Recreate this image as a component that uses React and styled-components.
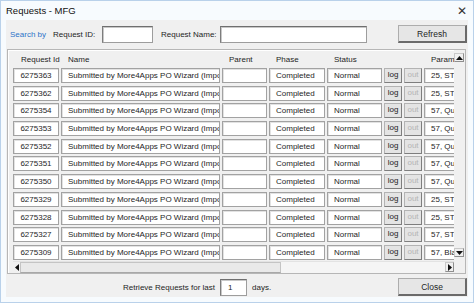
import styled, { createGlobalStyle } from 'styled-components';

const GlobalStyle = createGlobalStyle`
  html, body {
    margin: 0;
    padding: 0;
    background: #eaf4fb;
  }
  * {
    box-sizing: border-box;
  }
`;

const requests = [
  { id: '6275363', param: '25, ST' },
  { id: '6275362', param: '25, ST' },
  { id: '6275354', param: '57, Qu' },
  { id: '6275353', param: '57, Qu' },
  { id: '6275352', param: '57, Qu' },
  { id: '6275351', param: '57, Qu' },
  { id: '6275350', param: '57, Qu' },
  { id: '6275329', param: '25, ST' },
  { id: '6275328', param: '25, ST' },
  { id: '6275327', param: '57, ST' },
  { id: '6275309', param: '57, Bla' },
];

const Janela = styled.div`
  width: 474px;
  height: 303px;
  display: flex;
  flex-direction: column;
  background: #f7fbfe;
  border: 1px solid #b9d1ea;
  font-family: 'Liberation Sans', Arial, sans-serif;
  font-size: 8px;
  color: #1e1e1e;
  overflow: hidden;
`;

const BarraTitulo = styled.div`
  height: 19px;
  display: flex;
  align-items: center;
  justify-content: space-between;
  padding: 0 6px 0 5px;
  font-size: 9.5px;
  color: #111;
`;

const Fechar = styled.span`
  font-size: 12px;
  color: #333;
  line-height: 1;
`;

const Corpo = styled.div`
  flex: 1;
  display: flex;
  flex-direction: column;
  margin: 0 5px 5px 5px;
  background: #f0f0f0;
`;

const BarraPesquisa = styled.div`
  height: 27px;
  display: flex;
  align-items: center;
  padding: 1px 0 0 4px;
`;

const Rotulo = styled.span`
  width: ${(p) => p.$w}px;
  flex-shrink: 0;
  color: ${(p) => (p.$azul ? '#2e74c9' : '#1e1e1e')};
  white-space: nowrap;
`;

const Campo = styled.div`
  width: ${(p) => p.$w}px;
  height: 17px;
  flex-shrink: 0;
  background: #fff;
  border: 1px solid #9d9d9d;
  border-top-color: #6f6f6f;
  border-left-color: #7d7d7d;
  box-shadow: inset 1px 1px 0 #c8c8c8;
  margin-right: ${(p) => p.$mr || 0}px;
  display: flex;
  align-items: center;
  padding-left: 7px;
`;

const Botao = styled.div`
  width: 69px;
  height: 18px;
  margin-left: auto;
  margin-right: 1px;
  display: flex;
  align-items: center;
  justify-content: center;
  background: #e6e6e6;
  border: 1px solid #adadad;
  border-right: 2px solid #6a6a6a;
  border-bottom: 2px solid #6a6a6a;
  font-size: 8.5px;
`;

const Painel = styled.div`
  margin: 2px 2px 0 1px;
  height: 225px;
  display: grid;
  grid-template-columns: minmax(0, 1fr) 11px;
  grid-template-rows: minmax(0, 1fr) 12px;
  padding-left: 5px;
  border: 1px solid #b6b6b6;
  box-shadow: inset 1px 1px 0 #fff;
  background: #f0f0f0;
`;

const Conteudo = styled.div`
  grid-column: 1;
  grid-row: 1;
  overflow: hidden;
  min-width: 0;
`;

const Colunas = styled.div`
  display: grid;
  grid-template-columns: 46px 159px 45px 56px 55px 18px 18px 40px;
  column-gap: 2px;
  width: 520px;
`;

const Cabecalho = styled(Colunas)`
  height: 17px;
  align-items: center;
  padding-top: 1px;
`;

const TituloColuna = styled.span`
  padding-left: ${(p) => (p.$pl !== undefined ? p.$pl : 7)}px;
  white-space: nowrap;
`;

const Linhas = styled.div`
  display: flex;
  flex-direction: column;
  gap: 2.7px;
  padding-top: 1px;
`;

const Linha = styled(Colunas)`
  height: 15px;
`;

const Celula = styled.div`
  background: #fff;
  border: 1px solid #a2a2a2;
  box-shadow: inset 1px 1px 0 #e2e2e2;
  display: flex;
  align-items: center;
  justify-content: ${(p) => (p.$centro ? 'center' : 'flex-start')};
  padding-left: ${(p) => (p.$centro ? 0 : 6)}px;
  white-space: nowrap;
  overflow: hidden;
`;

const BotaoLinha = styled.div`
  background: #e4e4e4;
  border: 1px solid #b3b3b3;
  border-right-color: #7e7e7e;
  border-bottom-color: #7e7e7e;
  display: flex;
  align-items: center;
  justify-content: center;
  font-size: 8px;
  padding-bottom: 2px;
  color: ${(p) => (p.$inativo ? '#b4b4b4' : '#1e1e1e')};
`;

const RolagemVertical = styled.div`
  grid-column: 2;
  grid-row: 1 / 3;
  display: flex;
  flex-direction: column;
  justify-content: space-between;
  padding: 3px 0 16px 0;
  background: #f0f0f0;
`;

const RolagemHorizontal = styled.div`
  grid-column: 1;
  grid-row: 2;
  display: flex;
  align-items: stretch;
  height: 12px;
  border-top: 1px solid #e3e3e3;
`;

const Seta = styled.div`
  width: ${(p) => p.$w || 9}px;
  height: ${(p) => p.$h || 10}px;
  flex-shrink: 0;
  display: flex;
  align-items: center;
  justify-content: center;
  background: #f0f0f0;
  border: ${(p) => (p.$borda ? '1px solid #c9c9c9' : 'none')};
  border-bottom-color: #8e8e8e;
  border-right-color: #8e8e8e;
`;

const Polegar = styled.div`
  width: 261px;
  background: #e9e9e9;
  border: 1px solid #c4c4c4;
  border-bottom-color: #a8a8a8;
`;

const Trilho = styled.div`
  flex: 1;
  background: #f5f5f5;
`;

const Rodape = styled.div`
  flex: 1;
  display: flex;
  align-items: center;
  padding: 3px 0 0 0;
`;

const TextoRodape = styled.span`
  width: 97px;
  margin-left: 117px;
  white-space: nowrap;
`;

const Dias = styled.span`
  margin-left: 5px;
`;

const Triangulo = ({ dir }) => {
  const pontos = {
    up: '0,5 3.5,1 7,5',
    down: '0,1 3.5,5 7,1',
    left: '5,0 1,3.5 5,7',
    right: '1,0 5,3.5 1,7',
  };
  const vertical = dir === 'up' || dir === 'down';
  return (
    <svg width={vertical ? 7 : 6} height={vertical ? 6 : 7} viewBox={vertical ? '0 0 7 6' : '0 0 6 7'}>
      <polygon points={pontos[dir]} fill="#111" />
    </svg>
  );
};

function App() {
  return (
    <>
      <GlobalStyle />
      <Janela>
        <BarraTitulo>
          <span>Requests - MFG</span>
          <Fechar>✕</Fechar>
        </BarraTitulo>
        <Corpo>
          <BarraPesquisa>
            <Rotulo $azul $w={43}>Search by</Rotulo>
            <Rotulo $w={49}>Request ID:</Rotulo>
            <Campo $w={51} $mr={8} />
            <Rotulo $w={59}>Request Name:</Rotulo>
            <Campo $w={147} />
            <Botao>Refresh</Botao>
          </BarraPesquisa>
          <Painel>
            <Conteudo>
              <Cabecalho>
                <TituloColuna $pl={8}>Request Id</TituloColuna>
                <TituloColuna>Name</TituloColuna>
                <TituloColuna>Parent</TituloColuna>
                <TituloColuna>Phase</TituloColuna>
                <TituloColuna>Status</TituloColuna>
                <span />
                <span />
                <TituloColuna $pl={7}>Param</TituloColuna>
              </Cabecalho>
              <Linhas>
                {requests.map((req) => (
                  <Linha key={req.id}>
                    <Celula $centro>{req.id}</Celula>
                    <Celula>Submitted by More4Apps PO Wizard (Import)</Celula>
                    <Celula />
                    <Celula>Completed</Celula>
                    <Celula>Normal</Celula>
                    <BotaoLinha>log</BotaoLinha>
                    <BotaoLinha $inativo>out</BotaoLinha>
                    <Celula>{req.param}</Celula>
                  </Linha>
                ))}
              </Linhas>
            </Conteudo>
            <RolagemVertical>
              <Seta $w={10} $h={9} $borda>
                <Triangulo dir="up" />
              </Seta>
              <Seta $w={10} $h={9} $borda>
                <Triangulo dir="down" />
              </Seta>
            </RolagemVertical>
            <RolagemHorizontal>
              <Seta $w={7} $h={11}>
                <Triangulo dir="left" />
              </Seta>
              <Polegar />
              <Trilho />
              <Seta $w={9} $h={10} $borda>
                <Triangulo dir="right" />
              </Seta>
            </RolagemHorizontal>
          </Painel>
          <Rodape>
            <TextoRodape>Retrieve Requests for last</TextoRodape>
            <Campo $w={27}>1</Campo>
            <Dias>days.</Dias>
            <Botao>Close</Botao>
          </Rodape>
        </Corpo>
      </Janela>
    </>
  );
}

export default App;
